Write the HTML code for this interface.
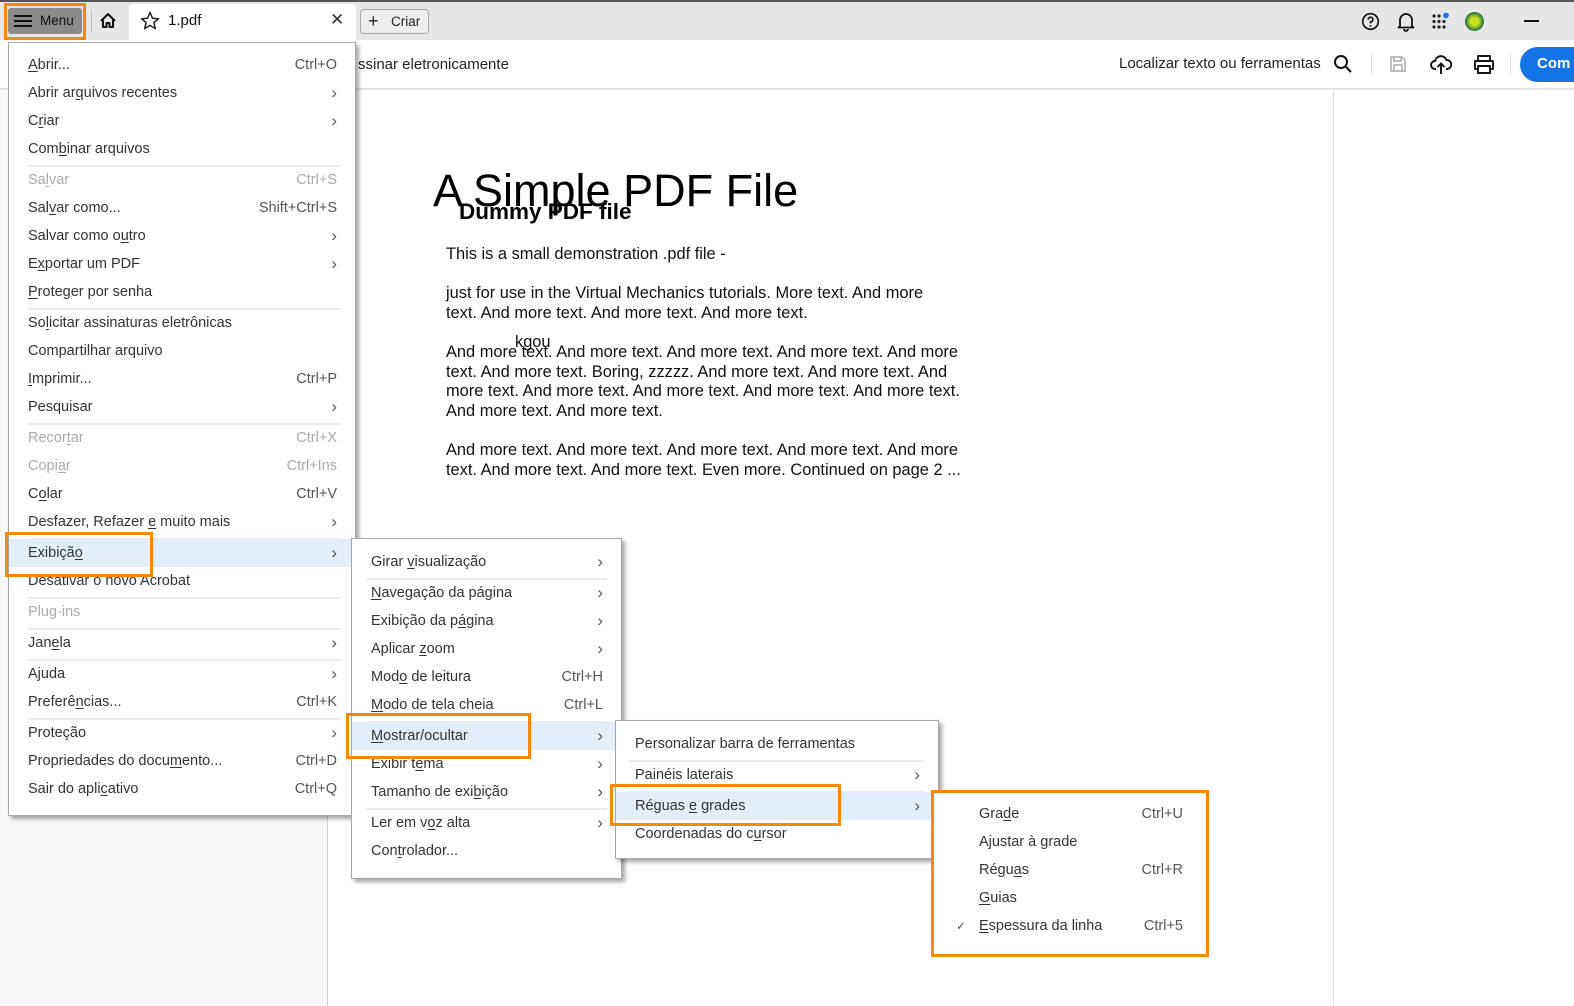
<!DOCTYPE html>
<html><head><meta charset="utf-8">
<style>
*{margin:0;padding:0;box-sizing:border-box}
body{width:1574px;height:1006px;overflow:hidden;position:relative;background:#fff;font-family:"Liberation Sans",Arial,sans-serif;color:#222}
.a{position:absolute}
.menu{position:absolute;background:#fff;border:1px solid #a8a8a8;box-shadow:3px 3px 4px rgba(0,0,0,.35)}
.it{position:absolute;left:0;right:0;height:28px;line-height:28px;font-size:14.5px;color:#333;white-space:nowrap}
.it .t{position:absolute;left:19px}
.it .k{position:absolute;right:18px;color:#555}
.it .c{position:absolute;right:18px;font-size:17px;color:#555}
.dis{color:#aaa!important}
.dis .k{color:#aaa}
.hl{background:#e4eef9}
.sep{position:absolute;height:2px;background:#ececec}
.ob{position:absolute;border:3px solid #f58a0a}
u{text-decoration:underline;text-underline-offset:2px}
.pdf{position:absolute;font-size:16.4px;color:#111;line-height:19.6px}
</style></head><body>
<div class="a" style="left:0;top:0;width:1574px;height:40px;background:#e6e6e6;border-top:2px solid #555"></div>
<div class="a" style="left:8px;top:8px;width:74px;height:26px;background:#8a8a8a;border-radius:3px"></div>
<div class="a" style="left:14px;top:13px;width:18px;height:16px">
<div style="height:2px;background:#111;margin-top:2px"></div><div style="height:2px;background:#111;margin-top:3px"></div><div style="height:2px;background:#111;margin-top:3px"></div></div>
<div class="a" style="left:40px;top:13px;font-size:13.5px;color:#111">Menu</div>
<div class="ob" style="left:4px;top:3px;width:82px;height:37px"></div>
<div class="a" style="left:91px;top:10px;width:1px;height:22px;background:#bbb"></div>
<svg class="a" style="left:98px;top:11px" width="20" height="20" viewBox="0 0 20 20"><path d="M3 10 L10 3 L17 10 M5 8.5 V16 H8.5 V12 H11.5 V16 H15 V8.5" fill="none" stroke="#111" stroke-width="2" stroke-linejoin="round"/></svg>
<div class="a" style="left:129px;top:4px;width:227px;height:36px;background:#fff;border-radius:4px 4px 0 0"></div>
<svg class="a" style="left:140px;top:11px" width="20" height="20" viewBox="0 0 20 20"><path d="M10 1.5 L12.5 7.2 L18.5 7.7 L13.9 11.6 L15.3 17.6 L10 14.4 L4.7 17.6 L6.1 11.6 L1.5 7.7 L7.5 7.2 Z" fill="none" stroke="#222" stroke-width="1.5" stroke-linejoin="round"/></svg>
<div class="a" style="left:168px;top:12px;font-size:15px;color:#111">1.pdf</div>
<div class="a" style="left:330px;top:10px;font-size:17px;color:#333">✕</div>
<div class="a" style="left:360px;top:9px;width:69px;height:25px;border:1px solid #aaa;border-radius:4px;background:#eee"></div>
<div class="a" style="left:368px;top:11px;font-size:18px;color:#222">+</div>
<div class="a" style="left:391px;top:14px;font-size:13.5px;color:#222">Criar</div>
<svg class="a" style="left:1361px;top:12px" width="19" height="19" viewBox="0 0 20 20"><circle cx="10" cy="10" r="8.2" fill="none" stroke="#111" stroke-width="1.7"/><path d="M7.5 8 A2.5 2.5 0 1 1 10 10.5 V12" fill="none" stroke="#111" stroke-width="1.7"/><circle cx="10" cy="14.5" r="1" fill="#111"/></svg>
<svg class="a" style="left:1396px;top:11px" width="20" height="21" viewBox="0 0 20 21"><path d="M4 15 V9 A6 6 0 0 1 16 9 V15 L17.5 16.5 H2.5 Z M8 18 A2 2 0 0 0 12 18" fill="none" stroke="#111" stroke-width="1.8" stroke-linejoin="round"/></svg>
<svg class="a" style="left:1431px;top:12px" width="20" height="20" viewBox="0 0 20 20"><g fill="#222"><circle cx="3" cy="4" r="1.6"/><circle cx="8" cy="4" r="1.6"/><circle cx="3" cy="9.5" r="1.6"/><circle cx="8" cy="9.5" r="1.6"/><circle cx="13" cy="9.5" r="1.6"/><circle cx="3" cy="15" r="1.6"/><circle cx="8" cy="15" r="1.6"/><circle cx="13" cy="15" r="1.6"/></g><circle cx="15" cy="3.5" r="2.8" fill="#1a73e8"/></svg>
<div class="a" style="left:1465px;top:12px;width:19px;height:19px;border-radius:50%;background:radial-gradient(circle at 50% 50%,#c8e020 30%,#1d6b3a 70%)"></div>
<div class="a" style="left:1524px;top:20px;width:15px;height:2px;background:#111"></div>
<div class="a" style="left:0;top:40px;width:1574px;height:50px;background:#fff;border-bottom:2px solid #e3e3e3"></div>
<div class="a" style="left:358px;top:56px;font-size:15px;color:#222">ssinar eletronicamente</div>
<div class="a" style="left:1119px;top:55px;font-size:15px;color:#222">Localizar texto ou ferramentas</div>
<svg class="a" style="left:1333px;top:54px" width="20" height="20" viewBox="0 0 20 20"><circle cx="8" cy="8" r="6" fill="none" stroke="#111" stroke-width="2"/><path d="M12.5 12.5 L18 18" stroke="#111" stroke-width="2.2"/></svg>
<div class="a" style="left:1371px;top:54px;width:1px;height:20px;background:#ddd"></div>
<svg class="a" style="left:1389px;top:55px" width="18" height="18" viewBox="0 0 18 18"><path d="M2 2 H13 L16 5 V16 H2 Z M5 2 V6 H12 V2 M5 16 V10 H13 V16" fill="none" stroke="#aaa" stroke-width="1.5"/></svg>
<svg class="a" style="left:1430px;top:54px" width="22" height="22" viewBox="0 0 22 22"><path d="M6 15 H5 A4 4 0 0 1 5 7 A6 6 0 0 1 16.5 6 A4.5 4.5 0 0 1 17 15 H16" fill="none" stroke="#111" stroke-width="1.9"/><path d="M11 20 V10 M7.5 13 L11 9.5 L14.5 13" fill="none" stroke="#111" stroke-width="1.9"/></svg>
<svg class="a" style="left:1473px;top:54px" width="22" height="21" viewBox="0 0 22 21"><path d="M5 7 V2 H17 V7 M5 15 H2 V7 H20 V15 H17 M5 12 H17 V19 H5 Z" fill="none" stroke="#111" stroke-width="1.9" stroke-linejoin="round"/></svg>
<div class="a" style="left:1510px;top:54px;width:1px;height:20px;background:#ddd"></div>
<div class="a" style="left:1520px;top:47px;width:80px;height:35px;background:#1473e6;border-radius:18px"></div>
<div class="a" style="left:1537px;top:55px;font-size:15px;font-weight:bold;color:#fff">Com</div>
<div class="a" style="left:0;top:91px;width:328px;height:915px;background:#f8f8f8;border-right:1px solid #cfcfcf"></div>
<div class="a" style="left:1333px;top:91px;width:1px;height:915px;background:#ddd"></div>
<div class="a" style="left:433px;top:165px;font-size:45px;color:#000">A Simple PDF File</div>
<div class="a" style="left:459px;top:199px;font-size:22.5px;font-weight:bold;color:#000">Dummy PDF file</div>
<div class="pdf" style="left:446px;top:245px">This is a small demonstration .pdf file -</div>
<div class="pdf" style="left:446px;top:284px">just for use in the Virtual Mechanics tutorials. More text. And more<br>text. And more text. And more text. And more text.</div>
<div class="pdf" style="left:515px;top:333px">kgou</div>
<div class="pdf" style="left:446px;top:343px">And more text. And more text. And more text. And more text. And more<br>text. And more text. Boring, zzzzz. And more text. And more text. And<br>more text. And more text. And more text. And more text. And more text.<br>And more text. And more text.</div>
<div class="pdf" style="left:446px;top:441px">And more text. And more text. And more text. And more text. And more<br>text. And more text. And more text. Even more. Continued on page 2 ...</div>

<div class="menu" style="left:8px;top:42px;width:348px;height:774px">
<div class="it" style="top:8px"><span class="t"><u>A</u>brir...</span><span class="k">Ctrl+O</span></div>
<div class="it" style="top:36px"><span class="t">Abrir ar<u>q</u>uivos recentes</span><span class="c">›</span></div>
<div class="it" style="top:64px"><span class="t">C<u>r</u>iar</span><span class="c">›</span></div>
<div class="it" style="top:92px"><span class="t">Com<u>b</u>inar arquivos</span></div>
<div class="sep" style="left:19px;right:14px;top:122px"></div>
<div class="it dis" style="top:123px"><span class="t">Sa<u>l</u>var</span><span class="k">Ctrl+S</span></div>
<div class="it" style="top:151px"><span class="t">Sal<u>v</u>ar como...</span><span class="k">Shift+Ctrl+S</span></div>
<div class="it" style="top:179px"><span class="t">Salvar como o<u>u</u>tro</span><span class="c">›</span></div>
<div class="it" style="top:207px"><span class="t">E<u>x</u>portar um PDF</span><span class="c">›</span></div>
<div class="it" style="top:235px"><span class="t"><u>P</u>roteger por senha</span></div>
<div class="sep" style="left:19px;right:14px;top:265px"></div>
<div class="it" style="top:266px"><span class="t">So<u>l</u>icitar assinaturas eletrônicas</span></div>
<div class="it" style="top:294px"><span class="t">Compartilhar arquivo</span></div>
<div class="it" style="top:322px"><span class="t"><u>I</u>mprimir...</span><span class="k">Ctrl+P</span></div>
<div class="it" style="top:350px"><span class="t">Pesquisar</span><span class="c">›</span></div>
<div class="sep" style="left:19px;right:14px;top:380px"></div>
<div class="it dis" style="top:381px"><span class="t">Recor<u>t</u>ar</span><span class="k">Ctrl+X</span></div>
<div class="it dis" style="top:409px"><span class="t">Copi<u>a</u>r</span><span class="k">Ctrl+Ins</span></div>
<div class="it" style="top:437px"><span class="t">C<u>o</u>lar</span><span class="k">Ctrl+V</span></div>
<div class="it" style="top:465px"><span class="t">Desfazer, Refazer <u>e</u> muito mais</span><span class="c">›</span></div>
<div class="sep" style="left:19px;right:14px;top:495px"></div>
<div class="it hl" style="top:496px"><span class="t">Exibiçã<u>o</u></span><span class="c">›</span></div>
<div class="it" style="top:524px"><span class="t">Desativar o novo Acrobat</span></div>
<div class="sep" style="left:19px;right:14px;top:554px"></div>
<div class="it dis" style="top:555px"><span class="t">Plug-ins</span></div>
<div class="sep" style="left:19px;right:14px;top:585px"></div>
<div class="it" style="top:586px"><span class="t">Jan<u>e</u>la</span><span class="c">›</span></div>
<div class="sep" style="left:19px;right:14px;top:616px"></div>
<div class="it" style="top:617px"><span class="t">Ajuda</span><span class="c">›</span></div>
<div class="it" style="top:645px"><span class="t">Preferê<u>n</u>cias...</span><span class="k">Ctrl+K</span></div>
<div class="sep" style="left:19px;right:14px;top:675px"></div>
<div class="it" style="top:676px"><span class="t">Proteção</span><span class="c">›</span></div>
<div class="it" style="top:704px"><span class="t">Propriedades do docu<u>m</u>ento...</span><span class="k">Ctrl+D</span></div>
<div class="it" style="top:732px"><span class="t">Sair do apli<u>c</u>ativo</span><span class="k">Ctrl+Q</span></div>
</div>
<div class="ob" style="left:5px;top:532px;width:148px;height:45px"></div>

<div class="menu" style="left:351px;top:538px;width:271px;height:341px">
<div class="it" style="top:9px"><span class="t">Girar <u>v</u>isualização</span><span class="c">›</span></div>
<div class="sep" style="left:14px;right:14px;top:39px"></div>
<div class="it" style="top:40px"><span class="t"><u>N</u>avegação da página</span><span class="c">›</span></div>
<div class="it" style="top:68px"><span class="t">Exibição da p<u>á</u>gina</span><span class="c">›</span></div>
<div class="it" style="top:96px"><span class="t">Aplicar <u>z</u>oom</span><span class="c">›</span></div>
<div class="it" style="top:124px"><span class="t">Mod<u>o</u> de leitura</span><span class="k">Ctrl+H</span></div>
<div class="it" style="top:152px"><span class="t"><u>M</u>odo de tela cheia</span><span class="k">Ctrl+L</span></div>
<div class="sep" style="left:14px;right:14px;top:182px"></div>
<div class="it hl" style="top:183px;right:6px"><span class="t"><u>M</u>ostrar/ocultar</span><span class="c" style="right:12px">›</span></div>
<div class="it" style="top:211px"><span class="t">Exibir t<u>e</u>ma</span><span class="c">›</span></div>
<div class="it" style="top:239px"><span class="t">Tamanho de exi<u>b</u>ição</span><span class="c">›</span></div>
<div class="sep" style="left:14px;right:14px;top:269px"></div>
<div class="it" style="top:270px"><span class="t">Ler em v<u>o</u>z alta</span><span class="c">›</span></div>
<div class="it" style="top:298px"><span class="t">Con<u>t</u>rolador...</span></div>
</div>
<div class="ob" style="left:346px;top:713px;width:185px;height:46px"></div>

<div class="menu" style="left:615px;top:720px;width:324px;height:139px">
<div class="it" style="top:9px"><span class="t">Personalizar barra de ferramentas</span></div>
<div class="sep" style="left:13px;right:14px;top:39px"></div>
<div class="it" style="top:40px"><span class="t">Painéis laterais</span><span class="c">›</span></div>
<div class="sep" style="left:13px;right:14px;top:70px"></div>
<div class="it hl" style="top:71px;right:6px"><span class="t">Réguas <u>e</u> grades</span><span class="c" style="right:12px">›</span></div>
<div class="it" style="top:99px"><span class="t">Coordenadas do c<u>u</u>rsor</span></div>
</div>
<div class="ob" style="left:610px;top:784px;width:231px;height:42px"></div>

<div class="menu" style="left:934px;top:793px;width:271px;height:161px;box-shadow:none;border:none">
<div class="it" style="top:7px"><span class="t" style="left:45px">Gra<u>d</u>e</span><span class="k" style="right:22px">Ctrl+U</span></div>
<div class="it" style="top:35px"><span class="t" style="left:45px">Ajustar à grade</span></div>
<div class="it" style="top:63px"><span class="t" style="left:45px">Régu<u>a</u>s</span><span class="k" style="right:22px">Ctrl+R</span></div>
<div class="it" style="top:91px"><span class="t" style="left:45px"><u>G</u>uias</span></div>
<div class="it" style="top:119px"><span class="t" style="left:22px;font-size:12px;color:#555">✓</span><span class="t" style="left:45px"><u>E</u>spessura da linha</span><span class="k" style="right:22px">Ctrl+5</span></div>
</div>
<div class="ob" style="left:931px;top:790px;width:278px;height:167px"></div>
</body></html>
